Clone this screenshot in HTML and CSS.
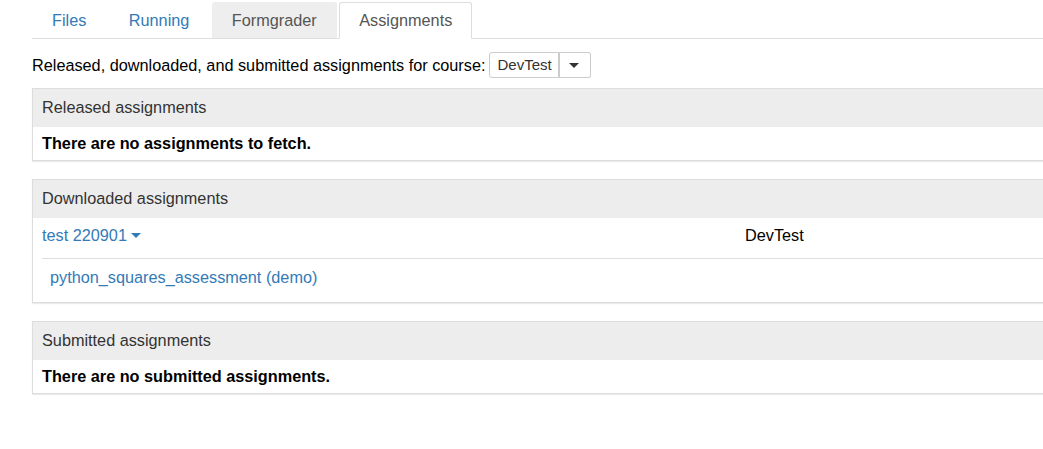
FILE: index.html
```html
<!DOCTYPE html>
<html>
<head>
<meta charset="utf-8">
<link rel="stylesheet" href="styles.css">
</head>
<body>
<div class="page">
  <ul class="tabs">
    <li class="tab"><a class="tab-link">Files</a></li>
    <li class="tab"><a class="tab-link">Running</a></li>
    <li class="tab tab-hover"><a class="tab-link">Formgrader</a></li>
    <li class="tab tab-active"><a class="tab-link">Assignments</a></li>
  </ul>
  <div class="course-line">
    <span class="course-label">Released, downloaded, and submitted assignments for course:</span>
    <div class="btn-group">
      <span class="btn btn-main">DevTest</span>
      <span class="btn btn-caret"><span class="caret"></span></span>
    </div>
  </div>

  <div class="panel">
    <div class="panel-heading">Released assignments</div>
    <div class="panel-body empty">There are no assignments to fetch.</div>
  </div>

  <div class="panel">
    <div class="panel-heading">Downloaded assignments</div>
    <div class="panel-list">
      <div class="list-row">
        <div class="col-name"><a class="link">test 220901<span class="caret caret-link"></span></a></div>
        <div class="col-course">DevTest</div>
      </div>
      <div class="list-sub">
        <a class="link">python_squares_assessment (demo)</a>
      </div>
    </div>
  </div>

  <div class="panel">
    <div class="panel-heading">Submitted assignments</div>
    <div class="panel-body empty">There are no submitted assignments.</div>
  </div>
</div>
</body>
</html>
```
FILE: styles.css
```css
html, body {
  margin: 0;
  padding: 0;
  overflow: hidden;
  background: #fff;
}
body {
  font-family: "Liberation Sans", Arial, sans-serif;
  font-size: 16.25px;
  line-height: 23px;
  color: #000;
}
.page {
  padding: 2px 0 0 32px;
  overflow: hidden;
}
.tabs {
  list-style: none;
  margin: 0 -20px 0 0;
  padding: 0;
  display: flex;
  border-bottom: 1px solid #ddd;
}
.tab {
  margin-right: 2.5px;
  margin-bottom: -1px;
}
.tab-link {
  display: block;
  padding: 6px 19px;
  border: 1px solid transparent;
  border-radius: 3px 3px 0 0;
  color: #337ab7;
}
.tab-hover .tab-link {
  background: #eee;
  color: #555;
  border-color: #eee #eee #ddd;
}
.tab-active .tab-link {
  background: #fff;
  color: #555;
  border-color: #ddd #ddd transparent;
}
.course-line {
  display: flex;
  align-items: center;
  margin: 13px 0 10px 0;
  height: 26px;
}
.course-label {
  margin-right: 4px;
}
.btn-group {
  display: flex;
  height: 26px;
}
.btn {
  box-sizing: border-box;
  height: 26px;
  border: 1px solid #ccc;
  background: #fff;
  color: #333;
  font-size: 15px;
  line-height: 24px;
  display: flex;
  align-items: center;
}
.btn-main {
  padding: 0 6px 0 7px;
  border-radius: 3px 0 0 3px;
}
.btn-caret {
  width: 32px;
  justify-content: center;
  border-left: none;
  border-radius: 0 3px 3px 0;
  position: relative;
}
.btn-caret::before {
  content: "";
  position: absolute;
  left: 0;
  top: 0;
  bottom: 0;
  border-left: 1px solid #ccc;
}
.caret {
  display: inline-block;
  width: 0;
  height: 0;
  border-top: 5px solid #333;
  border-left: 5px solid transparent;
  border-right: 5px solid transparent;
}
.panel {
  margin: 0 -20px 18px 0;
  border: 1px solid #ddd;
  box-shadow: 0 1px 1px rgba(0, 0, 0, 0.08);
  background: #fff;
}
.panel-heading {
  background: #ededed;
  color: #333;
  padding: 6.5px 9px 8.5px 9px;
}
.panel-body {
  padding: 5px 9px;
}
.empty {
  font-weight: bold;
}
.panel-list {
  padding: 0 0 0 9px;
}
.list-row {
  display: grid;
  grid-template-columns: 703px 1fr;
  padding: 6px 0 11px 0;
  border-bottom: 1px solid #ddd;
}
.link {
  color: #337ab7;
  text-decoration: none;
}
.caret-link {
  border-top-color: #337ab7;
  margin-left: 4px;
  vertical-align: 3px;
}
.col-course {
  color: #000;
}
.list-sub {
  padding: 7px 0 13px 8px;
}
```
